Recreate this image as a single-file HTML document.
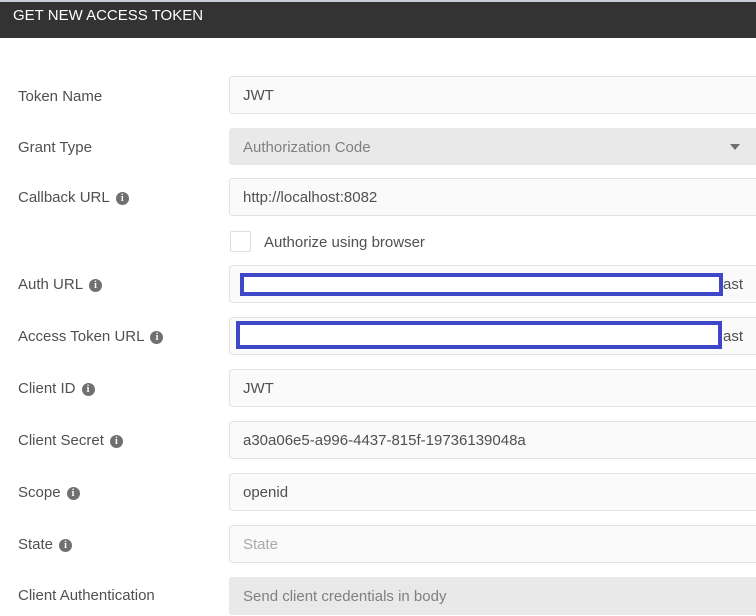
<!DOCTYPE html>
<html><head><style>
body{margin:0;width:756px;height:614px;overflow:hidden;background:#fff;font-family:"Liberation Sans",sans-serif;position:relative}
.hdr{position:absolute;left:0;top:0;width:756px;height:38px;background:#333;border-top:2px solid #c8ccd6;box-sizing:border-box}
.hdr span{position:absolute;left:13px;top:5px;color:#fff;font-size:15px}
.lbl{position:absolute;left:18px;font-size:15px;color:#505050;line-height:20px;margin-top:1px}
.i{display:inline-block;width:13px;height:13px;border-radius:50%;background:#707070;color:#fff;font-size:10px;font-weight:bold;text-align:center;line-height:13px;vertical-align:1px;margin-left:6px;font-family:"Liberation Serif",serif}
.in{position:absolute;left:229px;width:540px;height:38px;box-sizing:border-box;border:1px solid #e3e3e3;border-radius:3px;background:#fafafa;font-size:15px;color:#505050;line-height:38px;padding-left:13px}
.sel{background:#e9e9e9;border-color:#e9e9e9;color:#808080}
.ph{color:#aaa}
.arr{position:absolute;left:730px;width:0;height:0;border-left:5px solid transparent;border-right:5px solid transparent;border-top:6px solid #707070}
.box{position:absolute;border:4px solid #3d47c8;background:#fff;box-sizing:border-box}
.cb{position:absolute;left:230px;top:231px;width:21px;height:21px;border:1px solid #ddd;border-radius:2px;box-sizing:border-box;background:#fff}
</style></head><body>
<div class="hdr"><span>GET NEW ACCESS TOKEN</span></div>

<div class="lbl" style="top:86px">Token Name</div>
<div class="in" style="top:76px">JWT</div>

<div class="lbl" style="top:137px">Grant Type</div>
<div class="in sel" style="top:128px;height:37px">Authorization Code</div>
<div class="arr" style="top:144px"></div>

<div class="lbl" style="top:187px">Callback URL<span class="i">i</span></div>
<div class="in" style="top:178px">http://localhost:8082</div>

<div class="cb"></div>
<div class="lbl" style="left:264px;top:232px">Authorize using browser</div>

<div class="lbl" style="top:274px">Auth URL<span class="i">i</span></div>
<div class="in" style="top:265px;text-align:right;padding-right:25px">ast</div>
<div class="box" style="left:240px;top:273px;width:483px;height:23px"></div>

<div class="lbl" style="top:326px">Access Token URL<span class="i">i</span></div>
<div class="in" style="top:317px;text-align:right;padding-right:25px">ast</div>
<div class="box" style="left:236px;top:321px;width:486px;height:28px"></div>

<div class="lbl" style="top:378px">Client ID<span class="i">i</span></div>
<div class="in" style="top:369px">JWT</div>

<div class="lbl" style="top:430px">Client Secret<span class="i">i</span></div>
<div class="in" style="top:421px">a30a06e5-a996-4437-815f-19736139048a</div>

<div class="lbl" style="top:482px">Scope<span class="i">i</span></div>
<div class="in" style="top:473px">openid</div>

<div class="lbl" style="top:534px">State<span class="i">i</span></div>
<div class="in ph" style="top:525px">State</div>

<div class="lbl" style="top:585px">Client Authentication</div>
<div class="in sel" style="top:577px">Send client credentials in body</div>
</body></html>
